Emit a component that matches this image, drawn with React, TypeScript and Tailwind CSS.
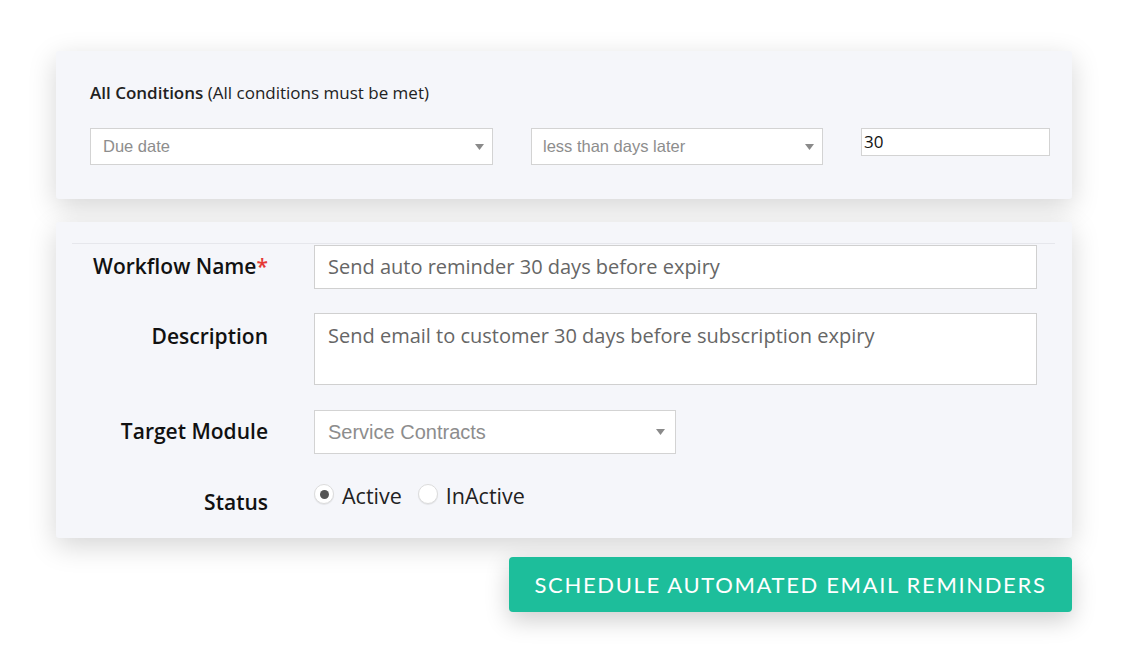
import React from 'react';

const openSans = { fontFamily: '"Open Sans", "Noto Sans", sans-serif' };

function Caret() {
  return (
    <svg width="9" height="6" viewBox="0 0 9 6" className="shrink-0">
      <path d="M0 0 L9 0 L4.5 6 Z" fill="#8a8a8a" />
    </svg>
  );
}

function FakeSelect({ value, className, textClass }: { value: string; className: string; textClass: string }) {
  return (
    <div className={`flex items-center justify-between bg-white border border-[#d3d3d3] ${className}`}>
      <span className={`text-[#8d8d8d] font-['Liberation_Sans',Arial,sans-serif] ${textClass}`}>{value}</span>
      <Caret />
    </div>
  );
}

function Radio({ checked, label }: { checked?: boolean; label: string }) {
  return (
    <div className="flex items-start">
      <span className="mt-[4px] w-5 h-5 rounded-full bg-white border border-[#dcdcdc] shadow-[0_1px_1px_rgba(0,0,0,0.08)] flex items-center justify-center">
        {checked && <span className="w-[9px] h-[9px] rounded-full bg-[#555]" />}
      </span>
      <span className="ml-2 text-[21.5px] leading-[32px] text-[#222]" style={openSans}>{label}</span>
    </div>
  );
}

export default function App() {
  return (
    <div className="w-[1130px] h-[656px] bg-white overflow-hidden">
      <div className="pl-[56px] pt-[51px] w-[1072px] flex flex-col">
        {/* Условия */}
        <div className="bg-[#f5f6fa] rounded-[3px] shadow-[0_8px_28px_rgba(0,0,0,0.17)] pl-[34px] pr-[22px] pt-[29px] pb-[34px]">
          <div className="text-[17px] text-[#222] leading-[26px]" style={openSans}>
            <span className="font-semibold">All Conditions</span> (All conditions must be met)
          </div>
          <div className="flex items-start mt-[22px]">
            <FakeSelect value="Due date" className="w-[403px] h-[37px] pl-[12px] pr-[8px]" textClass="text-[16.5px]" />
            <FakeSelect value="less than days later" className="ml-[38px] w-[292px] h-[37px] pl-[11px] pr-[8px]" textClass="text-[16.5px]" />
            <div className="ml-[38px] w-[189px] h-[28px] bg-white border border-[#d3d3d3] flex items-center pl-[2px]">
              <span className="text-[17px] text-[#111]" style={openSans}>30</span>
            </div>
          </div>
        </div>

        {/* Основная форма */}
        <div className="mt-[23px] bg-[#f5f6fa] rounded-[3px] shadow-[0_8px_28px_rgba(0,0,0,0.17)] pt-[21px] pb-[22px] pl-[16px] pr-[17px]">
          <div className="border-t border-[#e6e7ec] pt-[1px]">
            <div className="grid grid-cols-[196px_723px] gap-x-[46px] items-start">
              <div className="flex items-center justify-end h-[44px] text-[21px] font-semibold text-[#111]" style={openSans}>
                Workflow Name<span className="text-[#e53935]">*</span>
              </div>
              <div className="h-[44px] bg-white border border-[#d0d0d0] flex items-center pl-[13px] text-[20px] text-[#666]" style={openSans}>
                Send auto reminder 30 days before expiry
              </div>

              <div className="mt-[24px] flex justify-end pt-[8px] text-[21px] leading-[30px] font-semibold text-[#111]" style={openSans}>
                Description
              </div>
              <div className="mt-[24px] h-[72px] bg-white border border-[#d0d0d0] pl-[13px] pt-[8px] text-[20px] text-[#666] leading-[28px]" style={openSans}>
                Send email to customer 30 days before subscription expiry
              </div>

              <div className="mt-[25px] flex items-center justify-end h-[44px] text-[21px] font-semibold text-[#111]" style={openSans}>
                Target Module
              </div>
              <div className="mt-[25px]">
                <FakeSelect value="Service Contracts" className="w-[362px] h-[44px] pl-[13px] pr-[10px]" textClass="text-[20px]" />
              </div>

              <div className="mt-[34px] flex justify-end text-[21px] font-semibold text-[#111] leading-[28px]" style={openSans}>
                Status
              </div>
              <div className="mt-[26px] flex items-start gap-[16px]">
                <Radio checked label="Active" />
                <Radio label="InActive" />
              </div>
            </div>
          </div>
        </div>

        <div className="mt-[19px] self-end">
          <button className="w-[563px] h-[55px] rounded-[4px] bg-[#1dbe9b] shadow-[0_8px_24px_rgba(0,0,0,0.2)] text-white text-[22px] tracking-[1.65px] font-['Lato',sans-serif]">
            SCHEDULE AUTOMATED EMAIL REMINDERS
          </button>
        </div>
      </div>
    </div>
  );
}
